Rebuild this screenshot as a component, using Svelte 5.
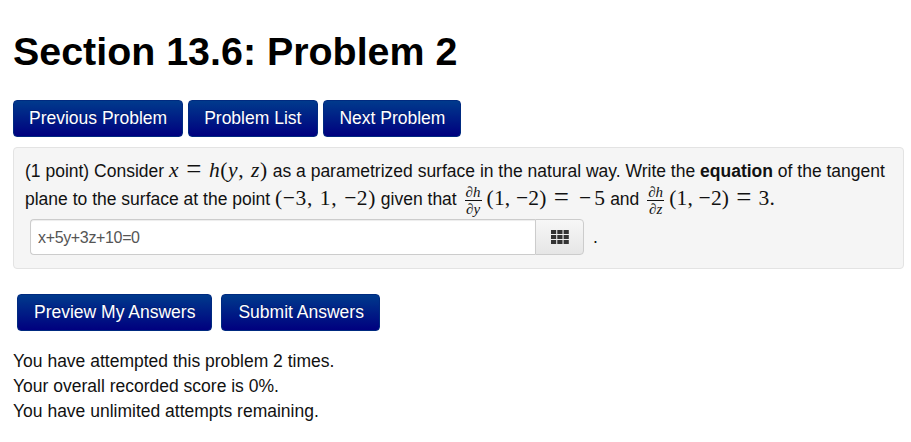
<script>
  const buttons = ['Previous Problem', 'Problem List', 'Next Problem'];
  const attempts = [
    'You have attempted this problem 2 times.',
    'Your overall recorded score is 0%.',
    'You have unlimited attempts remaining.'
  ];
</script>

{#snippet partial(v)}
  <span class="frac"><span class="num"><i>∂h</i></span><span class="den"><i>∂{v}</i></span></span>
{/snippet}

<main class="page">
  <h1>Section 13.6: Problem 2</h1>
  <nav class="nav">
    {#each buttons as b}
      <button class="btn">{b}</button>
    {/each}
  </nav>
  <section class="well">
    <p class="line">(1 point) Consider <span class="m"><i>x</i><span class="rel">=</span><i>h</i>(<i>y</i>, <i>z</i>)</span> as a parametrized surface in the natural way. Write the <b>equation</b> of the tangent</p>
    <p class="line">plane to the surface at the point <span class="m">(−3, 1, −2)</span> given that {@render partial('y')}<span class="m tight">(1, −2)<span class="rel">=</span><span class="neg">−</span>5</span> and {@render partial('z')}<span class="m tight">(1, −2)<span class="rel">=</span>3.</span></p>
    <div class="answer">
      <div class="group">
        <input class="field" value="x+5y+3z+10=0" />
        <span class="addon">
          <svg width="18" height="14" viewBox="0 0 18 14" aria-hidden="true">
            {#each [0, 5, 10] as y}
              {#each [0, 6.3, 12.6] as x}
                <rect x={x} y={y} width="5.2" height="4" fill="#333" />
              {/each}
            {/each}
          </svg>
        </span>
      </div>
      <span class="dot">.</span>
    </div>
  </section>
  <div class="actions">
    <button class="btn">Preview My Answers</button>
    <button class="btn">Submit Answers</button>
  </div>
  <div class="attempts">
    {#each attempts as a}
      <div>{a}</div>
    {/each}
  </div>
</main>

<style>
  :global(body) { margin: 0; background: #fff; }
  .page {
    font-family: "Liberation Sans", Arial, sans-serif;
    color: #000;
    padding: 0 7px 0 13px;
    box-sizing: border-box;
    width: 911px;
    height: 442px;
    overflow: hidden;
  }
  h1 {
    font-size: 39.4px;
    line-height: 42px;
    font-weight: 700;
    margin: 0;
    padding-top: 30px;
  }
  .nav { display: flex; gap: 5px; margin-top: 28px; }
  .btn {
    font: 400 17.5px/23px "Liberation Sans", Arial, sans-serif;
    color: #fff;
    height: 37px;
    padding: 0 16px;
    border: 1px solid #002a80;
    border-radius: 4px;
    background: linear-gradient(to bottom, #003a8c, #00007f);
    text-shadow: 0 -1px 0 rgba(0,0,0,.25);
  }
  .nav .btn { padding: 0 15px; }
  .nav .btn:nth-child(2) { padding-right: 16px; }
  .actions .btn:last-child { padding-right: 15px; }
  .well {
    margin-top: 10px;
    height: 122px;
    box-sizing: border-box;
    background: #f5f5f5;
    border: 1px solid #e3e3e3;
    border-radius: 4px;
    padding: 8px 11px 0;
    font-size: 17.5px;
    color: #111;
  }
  .line { margin: 0; height: 28px; line-height: 28px; white-space: nowrap; }
  .m {
    font-family: "Liberation Serif", serif;
    font-size: 21.5px;
    letter-spacing: 0.6px;
    word-spacing: 1px;
    color: #111;
  }
  .m.tight { letter-spacing: 0.2px; word-spacing: 0; }
  .rel { margin: 0 7px; font-size: 1.25em; line-height: 1; vertical-align: -1px; }
  .neg { margin: 0 3px; }
  .frac {
    display: inline-flex;
    flex-direction: column;
    align-items: center;
    vertical-align: middle;
    font-family: "Liberation Serif", serif;
    font-size: 15px;
    line-height: 16px;
    margin: -4px 5px -4px 3px;
  }
  .num { border-bottom: 1px solid #111; padding: 0 1px; }
  .answer { display: flex; align-items: center; margin: 7px 0 0 5px; }
  .group { display: flex; width: 554px; height: 36px; }
  .field {
    flex: 1;
    min-width: 0;
    box-sizing: border-box;
    border: 1px solid #ccc;
    border-right: 0;
    border-radius: 4px 0 0 4px;
    padding: 1px 7px 0;
    background: #fff;
    font: 16px "Liberation Sans", Arial, sans-serif;
    letter-spacing: -0.35px;
    color: #555;
    box-shadow: inset 0 1px 1px rgba(0,0,0,.075);
  }
  .addon {
    width: 49px;
    box-sizing: border-box;
    display: flex;
    align-items: center;
    justify-content: center;
    border: 1px solid #ccc;
    border-radius: 0 4px 4px 0;
    background: linear-gradient(to bottom, #f7f7f7, #e6e6e6);
  }
  .dot { margin-left: 9px; font-size: 17.5px; color: #111; }
  .actions { display: flex; gap: 9px; margin: 25px 0 0 4px; }
  .attempts { margin-top: 18px; font-size: 17.5px; line-height: 25px; color: #111; }
</style>
